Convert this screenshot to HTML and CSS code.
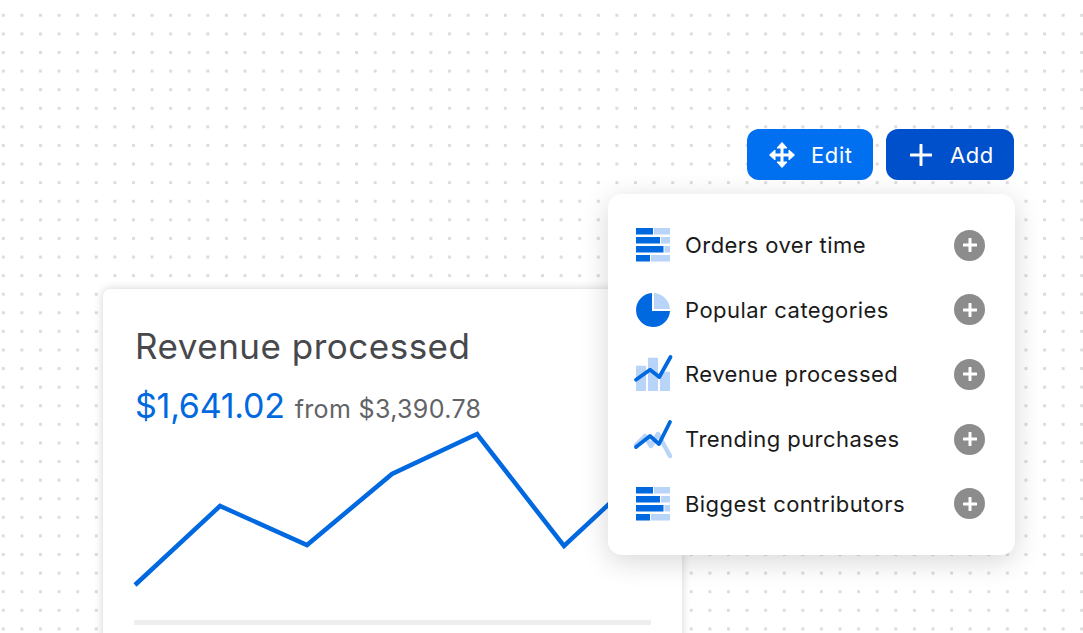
FILE: index.html
```html
<!DOCTYPE html>
<html lang="en">
<head>
<meta charset="utf-8">
<title>Revenue dashboard</title>
<link rel="stylesheet" href="styles.css">
</head>
<body>
<main class="stage">
  <section class="card">
    <h2 class="card-title">Revenue processed</h2>
    <p class="card-figures"><span class="amount">$1,641.02</span> <span class="total">from $3,390.78</span></p>
    <svg class="chart" viewBox="0 0 517 150" width="517" height="150" aria-hidden="true">
      <polyline class="chart-line" points="0,123 85,44 172,83 257,12 342,-28 429,84 517,2"/>
    </svg>
    <div class="axis"></div>
  </section>
  <aside class="widgets">
    <div class="toolbar">
      <button class="btn btn-edit">
        <svg class="btn-icon" viewBox="0 0 26 26" width="26" height="26" aria-hidden="true"><path class="move" d="M13 3v20M3 13h20"/><path class="move-head" d="M13 0.5l5 5.5h-10zM13 25.5l5-5.5h-10zM0.5 13l5.5-5v10zM25.5 13l-5.5-5v10z"/></svg>
        Edit
      </button>
      <button class="btn btn-add">
        <svg class="btn-icon" viewBox="0 0 22 22" width="22" height="22" aria-hidden="true"><path class="plus-big" d="M11 1v20M1 11h20"/></svg>
        Add
      </button>
    </div>
    <ul class="menu">
      <li class="menu-item">
        <svg class="item-icon" viewBox="0 0 34 34" width="34" height="34" aria-hidden="true"><path class="dark" d="M0 0h17v6.5H0zM0 9h24v6.5H0zM0 18h27.5v6.5H0zM0 27h14v6.5H0z"/><path class="light" d="M18 0h16v6.5H18zM25 9h9v6.5h-9zM28.5 18H34v6.5h-5.500zM15 27h19v6.500H15z"/></svg>
        <span class="item-label">Orders over time</span>
        <span class="item-add"><svg viewBox="0 0 14 14" width="14" height="14" aria-hidden="true"><path class="plus" d="M7 1v12M1 7h12"/></svg></span>
      </li>
      <li class="menu-item">
        <svg class="item-icon" viewBox="0 0 34 34" width="34" height="34" aria-hidden="true"><path class="dark" d="M16 0.030A17 17 0 1 0 34 18H16z"/><path class="light" d="M18 0.100A17 17 0 0 1 33.900 16H18z"/></svg>
        <span class="item-label">Popular categories</span>
        <span class="item-add"><svg viewBox="0 0 14 14" width="14" height="14" aria-hidden="true"><path class="plus" d="M7 1v12M1 7h12"/></svg></span>
      </li>
      <li class="menu-item">
        <svg class="item-icon" viewBox="0 0 34 36" width="34" height="36" aria-hidden="true"><path class="light" d="M0 9.700h10V35H0zM12 1.700h10V35H12zM24 15.700h10V35H24z"/><polyline class="trend" points="0,23.700 14,13.700 23.300,21 34.500,1"/></svg>
        <span class="item-label">Revenue processed</span>
        <span class="item-add"><svg viewBox="0 0 14 14" width="14" height="14" aria-hidden="true"><path class="plus" d="M7 1v12M1 7h12"/></svg></span>
      </li>
      <li class="menu-item">
        <svg class="item-icon" viewBox="0 0 34 38" width="34" height="38" aria-hidden="true"><polyline class="trend-light" points="0,25 9,16 15,26 22,14 34,36"/><polyline class="trend" points="0,27 14,16 23,24 34,2"/></svg>
        <span class="item-label">Trending purchases</span>
        <span class="item-add"><svg viewBox="0 0 14 14" width="14" height="14" aria-hidden="true"><path class="plus" d="M7 1v12M1 7h12"/></svg></span>
      </li>
      <li class="menu-item">
        <svg class="item-icon" viewBox="0 0 34 34" width="34" height="34" aria-hidden="true"><path class="dark" d="M0 0h17v6.5H0zM0 9h24v6.500H0zM0 18h27.500v6.500H0zM0 27h14v6.500H0z"/><path class="light" d="M18 0h16v6.500H18zM25 9h9v6.500h-9zM28.500 18H34v6.500h-5.500zM15 27h19v6.500H15z"/></svg>
        <span class="item-label">Biggest contributors</span>
        <span class="item-add"><svg viewBox="0 0 14 14" width="14" height="14" aria-hidden="true"><path class="plus" d="M7 1v12M1 7h12"/></svg></span>
      </li>
    </ul>
  </aside>
</main>
</body>
</html>
```
FILE: styles.css
```css
* { box-sizing: border-box; }
html, body { margin: 0; padding: 0; background: #fff; }
.stage {
  position: relative;
  width: 1083px;
  height: 633px;
  overflow: hidden;
  font-family: Inter, "Liberation Sans", sans-serif;
  background-color: #fff;
  background-image: radial-gradient(circle at center, #dcdcdc 0, #dcdcdc 1.4px, rgba(220,220,220,0) 2px);
  background-size: 18.6px 18.6px;
  background-position: -6px 6px;
}
.card {
  position: absolute;
  left: 103px;
  top: 289px;
  width: 579px;
  height: 400px;
  padding: 34px 31px 0 32px;
  background: #fff;
  border-radius: 7px;
  box-shadow: 0 0 10px rgba(0,0,0,.18);
}
.card-title {
  margin: 0;
  font-size: 35px;
  line-height: 46px;
  font-weight: 400;
  letter-spacing: 0.5px;
  color: #47484c;
}
.card-figures {
  margin: 13px 0 0;
  line-height: 48px;
  display: flex;
  align-items: baseline;
  gap: 10px;
}
.amount { font-size: 34px; color: #0069e0; letter-spacing: -0.25px; }
.total { font-size: 25px; color: #626366; letter-spacing: 0.35px; }
.chart { display: block; margin-top: 29px; overflow: visible; }
.chart-line { fill: none; stroke: #0069e0; stroke-width: 4.5; }
.axis { height: 5px; margin: 8px 0 0 -1px; width: 517px; background: #eeeeee; }
.widgets {
  position: absolute;
  left: 608px;
  top: 129px;
  width: 407px;
  display: flex;
  flex-direction: column;
  gap: 14px;
}
.toolbar { display: flex; justify-content: flex-end; gap: 13px; padding-right: 1px; }
.btn {
  height: 51px;
  display: flex;
  align-items: center;
  border: 0;
  border-radius: 12px;
  color: #fff;
  font: 400 22px Inter, "Liberation Sans", sans-serif;
  letter-spacing: 0.6px;
}
.btn-edit { width: 126px; padding-left: 22px; gap: 16px; background: #0070f0; }
.btn-add { width: 128px; padding-left: 24px; gap: 18px; background: #0050cc; }
.move { fill: none; stroke: #fff; stroke-width: 3; }
.move-head { fill: #fff; stroke: #fff; stroke-width: 1; stroke-linejoin: round; }
.plus-big { fill: none; stroke: #fff; stroke-width: 3; stroke-linecap: round; }
.menu {
  margin: 0;
  padding: 19px 30px 19px 28px;
  list-style: none;
  background: #fff;
  border-radius: 14px;
  box-shadow: 0 6px 28px rgba(0,0,0,.16);
  height: 361px;
  display: flex;
  flex-direction: column;
}
.menu-item { flex: 1; display: flex; align-items: center; gap: 15px; }
.item-icon { flex: none; overflow: visible; }
.item-label { flex: 1; font-size: 22px; letter-spacing: 0.45px; color: #1a1a1a; white-space: nowrap; }
.item-add {
  flex: none;
  width: 31px;
  height: 31px;
  border-radius: 50%;
  background: #8c8c8c;
  display: flex;
  align-items: center;
  justify-content: center;
}
.plus { fill: none; stroke: #fff; stroke-width: 3; stroke-linecap: round; }
.dark { fill: #0069e0; }
.light { fill: #b8d4f8; }
.trend { fill: none; stroke: #0069e0; stroke-width: 3.8; stroke-linecap: round; stroke-linejoin: round; }
.trend-light { fill: none; stroke: #b8d4f8; stroke-width: 4.5; stroke-linecap: round; stroke-linejoin: round; }
```
